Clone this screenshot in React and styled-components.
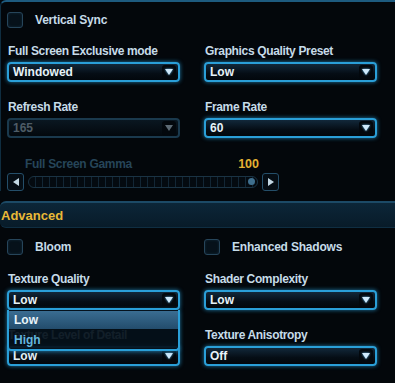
import React from "react";
import styled, { createGlobalStyle, css } from "styled-components";

const GlobalStyle = createGlobalStyle`
  html, body {
    margin: 0;
    padding: 0;
    background: #03070b;
  }
  * {
    box-sizing: border-box;
  }
`;

const Window = styled.div`
  width: 395px;
  height: 383px;
  overflow: hidden;
  background: #03070b;
  font-family: "Liberation Sans", Arial, sans-serif;
  font-weight: bold;
  font-size: 12px;
  color: #c6dbe8;
`;

const Panel = styled.div`
  border-top: 2px solid #1d5b7f;
  border-left: 1px solid #0f2d40;
  border-top-left-radius: 6px;
  padding: 10px 18px 0 6px;
`;

const LowerPanel = styled.div`
  padding: 11px 18px 0 7px;
`;

const CheckRow = styled.div`
  display: grid;
  grid-template-columns: 173px 173px;
  column-gap: 24px;
`;

const CheckItem = styled.label`
  display: flex;
  align-items: center;
  gap: 12px;
  height: 16px;
  letter-spacing: -0.2px;
`;

const Box = styled.span`
  width: 16px;
  height: 16px;
  border: 1.5px solid #26455a;
  border-radius: 3px;
  background: #06111a;
  box-shadow: inset 0 0 3px rgba(40, 90, 120, 0.35);
`;

const FieldGrid = styled.div`
  display: grid;
  grid-template-columns: 173px 173px;
  column-gap: 24px;
  row-gap: 18px;
  margin-top: ${({ $top }) => $top}px;
`;

const Field = styled.div`
  display: flex;
  flex-direction: column;
  gap: 4px;
`;

const Label = styled.div`
  height: 14px;
  line-height: 14px;
  padding-left: 1px;
  letter-spacing: -0.35px;
  white-space: nowrap;
`;

const SelectWrap = styled.div`
  position: relative;
`;

const SelectBox = styled.div`
  height: 20px;
  display: flex;
  align-items: center;
  justify-content: space-between;
  padding: 0 2px 0 4px;
  border: 2px solid #2a9fd8;
  border-radius: 4px;
  background: linear-gradient(#12283a, #050d15 60%, #02070c);
  box-shadow: 0 0 4px rgba(42, 159, 216, 0.75);
  color: #e6f2f8;
  ${({ $disabled }) =>
    $disabled &&
    css`
      border-color: #1a394d;
      box-shadow: none;
      color: #4e5c66;
      background: linear-gradient(#0a1721, #03080d);
    `}
`;

const ArrowButton = styled.span`
  width: 14px;
  height: 14px;
  border-radius: 3px;
  background: #03080d;
  display: flex;
  align-items: center;
  justify-content: center;

  &::after {
    content: "";
    width: 0;
    height: 0;
    border-left: 4px solid transparent;
    border-right: 4px solid transparent;
    border-top: 6px solid ${({ $disabled }) => ($disabled ? "#5c6a74" : "#cfe9fb")};
    filter: ${({ $disabled }) => ($disabled ? "none" : "drop-shadow(0 0 1px #5fb8ea)")};
  }
`;

const OptionList = styled.div`
  position: absolute;
  top: 100%;
  left: 0;
  right: 0;
  height: 41px;
  padding: 1px 0;
  border: 2px solid #2a9fd8;
  border-top: none;
  border-radius: 0 0 4px 4px;
  background: rgba(4, 16, 26, 0.93);
  box-shadow: 0 0 4px rgba(42, 159, 216, 0.75);
  z-index: 2;
`;

const Option = styled.div`
  height: 18px;
  line-height: 18px;
  padding-left: 5px;
  margin-top: ${({ $first }) => ($first ? 0 : 2)}px;
  color: ${({ $active }) => ($active ? "#e8f4fa" : "#63b6de")};
  ${({ $active }) =>
    $active &&
    css`
      background: linear-gradient(#3a6d92, #234c6c);
    `}
`;

const Gamma = styled.div`
  margin-top: 19px;
`;

const GammaHeader = styled.div`
  display: flex;
  height: 14px;
  line-height: 14px;
  padding-left: 18px;
  width: 252px;
  justify-content: space-between;
`;

const DimLabel = styled.span`
  color: #264559;
  letter-spacing: -0.3px;
`;

const Value = styled.span`
  color: #e4b133;
  font-size: 12.5px;
`;

const SliderRow = styled.div`
  display: flex;
  align-items: center;
  gap: 4px;
  margin-top: 2px;
`;

const StepButton = styled.span`
  width: 17px;
  height: 18px;
  border: 1.5px solid #244e69;
  border-radius: 3px;
  background: #050d14;
  display: flex;
  align-items: center;
  justify-content: center;

  &::after {
    content: "";
    width: 0;
    height: 0;
    border-top: 4px solid transparent;
    border-bottom: 4px solid transparent;
    ${({ $dir }) =>
      $dir === "left"
        ? css`border-right: 6px solid #c3d8e4;`
        : css`border-left: 6px solid #c3d8e4;`}
  }
`;

const Track = styled.div`
  position: relative;
  width: 230px;
  height: 12px;
  border: 1.5px solid #1a3344;
  border-radius: 6px;
  background: repeating-linear-gradient(
      90deg,
      transparent 0 6px,
      #122635 6px 7px
    ),
    #040a10;
  background-clip: padding-box;
`;

const Knob = styled.span`
  position: absolute;
  right: 2px;
  top: 1px;
  width: 7px;
  height: 7px;
  border-radius: 50%;
  background: #3f6f8e;
`;

const SectionBar = styled.div`
  margin-top: 10px;
  height: 27px;
  border-top: 2px solid #1c4a66;
  border-bottom: 1px solid #0f2e42;
  border-radius: 6px 0 0 6px;
  background: linear-gradient(#0c2638, #081b29);
  display: flex;
  align-items: center;
  padding-left: 1px;
  color: #e8b937;
  font-size: 13px;
`;

function Select({ value, disabled, options }) {
  return (
    <SelectWrap>
      <SelectBox $disabled={disabled}>
        <span>{value}</span>
        <ArrowButton $disabled={disabled} />
      </SelectBox>
      {options && (
        <OptionList>
          {options.map((o, i) => (
            <Option key={o} $first={i === 0} $active={o === value}>
              {o}
            </Option>
          ))}
        </OptionList>
      )}
    </SelectWrap>
  );
}

function Check({ label }) {
  return (
    <CheckItem>
      <Box />
      <span>{label}</span>
    </CheckItem>
  );
}

export default function App() {
  return (
    <>
      <GlobalStyle />
      <Window>
        <Panel>
          <CheckRow>
            <Check label="Vertical Sync" />
          </CheckRow>
          <FieldGrid $top={16}>
            <Field>
              <Label>Full Screen Exclusive mode</Label>
              <Select value="Windowed" />
            </Field>
            <Field>
              <Label>Graphics Quality Preset</Label>
              <Select value="Low" />
            </Field>
            <Field>
              <Label>Refresh Rate</Label>
              <Select value="165" disabled />
            </Field>
            <Field>
              <Label>Frame Rate</Label>
              <Select value="60" />
            </Field>
          </FieldGrid>
          <Gamma>
            <GammaHeader>
              <DimLabel>Full Screen Gamma</DimLabel>
              <Value>100</Value>
            </GammaHeader>
            <SliderRow>
              <StepButton $dir="left" />
              <Track>
                <Knob />
              </Track>
              <StepButton $dir="right" />
            </SliderRow>
          </Gamma>
        </Panel>
        <SectionBar>Advanced</SectionBar>
        <LowerPanel>
          <CheckRow>
            <Check label="Bloom" />
            <Check label="Enhanced Shadows" />
          </CheckRow>
          <FieldGrid $top={17}>
            <Field>
              <Label>Texture Quality</Label>
              <Select value="Low" options={["Low", "High"]} />
            </Field>
            <Field>
              <Label>Shader Complexity</Label>
              <Select value="Low" />
            </Field>
            <Field>
              <Label>Texture Level of Detail</Label>
              <Select value="Low" />
            </Field>
            <Field>
              <Label>Texture Anisotropy</Label>
              <Select value="Off" />
            </Field>
          </FieldGrid>
        </LowerPanel>
      </Window>
    </>
  );
}
